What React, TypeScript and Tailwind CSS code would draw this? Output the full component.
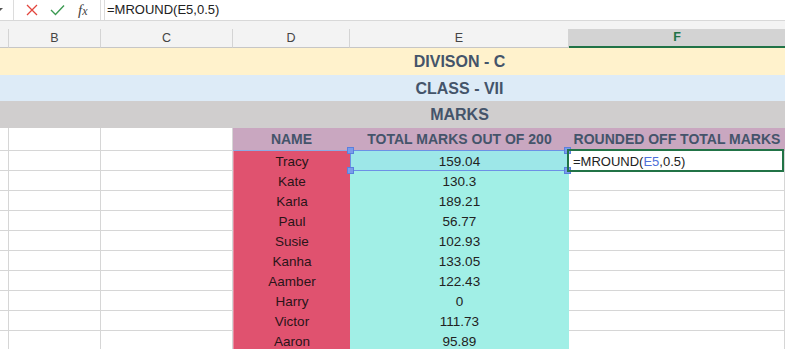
import React from "react";

const names = ["Tracy", "Kate", "Karla", "Paul", "Susie", "Kanha", "Aamber", "Harry", "Victor", "Aaron"];
const marks = ["159.04", "130.3", "189.21", "56.77", "102.93", "133.05", "122.43", "0", "111.73", "95.89"];

const grid = "border-r border-b border-[#d6d6d6]";

function Handle({ pos }: { pos: string }) {
  return <div className={`absolute w-[7px] h-[7px] bg-[#7a9ceb] border border-[#5b80dd] ${pos}`} />;
}

export default function App() {
  return (
    <div className="w-[785px] h-[349px] overflow-hidden bg-white relative font-['Liberation_Sans',Arial,sans-serif] text-[#222]">
      {/* formula bar */}
      <div className="h-[21px] flex border-b border-[#d8d8d8] bg-white">
        <div className="w-[14px] h-full relative border-r border-[#dcdcdc]">
          <div className="absolute left-[-3px] top-[8px] w-0 h-0 border-l-[3px] border-r-[3px] border-t-[3px] border-l-transparent border-r-transparent border-t-[#555]" />
        </div>
        <div className="w-[87px] h-full flex items-center border-r border-[#dcdcdc]">
          <svg width="12" height="12" viewBox="0 0 12 12" className="ml-[12px]">
            <path d="M1 1 L11 11 M11 1 L1 11" stroke="#e2453d" strokeWidth="1.3" fill="none" />
          </svg>
          <svg width="15" height="12" viewBox="0 0 15 12" className="ml-[12px]">
            <path d="M1 6 L5.5 10.5 L14 1.5" stroke="#3c9a52" strokeWidth="1.4" fill="none" />
          </svg>
          <span className="ml-[13px] font-['Liberation_Serif',serif] italic text-[15px] leading-none text-[#444]">
            f<span className="text-[12px]">x</span>
          </span>
        </div>
        <div className="w-[4px] h-full border-r border-[#dcdcdc]" />
        <div className="flex-1 h-full flex items-center pl-[2px] text-[13px] text-[#222]">=MROUND(E5,0.5)</div>
      </div>
      <div className="h-[8px] bg-[#f3f3f3]" />
      {/* column headers */}
      <div className="h-[19px] flex bg-[#f3f3f3] text-[12.5px] text-[#444]">
        <div className="w-[9px] h-full border-r border-b border-r-[#d4d4d4] border-b-[#c6c6c6]" />
        <div className="w-[92px] h-full flex items-center justify-center border-r border-b border-r-[#d4d4d4] border-b-[#c6c6c6]">B</div>
        <div className="w-[132px] h-full flex items-center justify-center border-r border-b border-r-[#d4d4d4] border-b-[#c6c6c6]">C</div>
        <div className="w-[117px] h-full flex items-center justify-center border-r border-b border-r-[#d4d4d4] border-b-[#c6c6c6]">D</div>
        <div className="w-[219px] h-full flex items-center justify-center border-r border-b border-r-[#d4d4d4] border-b-[#c6c6c6]">E</div>
        <div className="w-[216px] h-full flex items-center justify-center bg-[#d3d3d3] border-b-2 border-[#217346] text-[#217346] font-bold">F</div>
      </div>
      {/* title rows */}
      <div className="h-[27px] flex bg-[#fff2cc]">
        <div className="w-[350px]" />
        <div className="w-[219px] flex items-center justify-center pt-[1px] whitespace-nowrap font-bold text-[16px] text-[#44546a]">DIVISON - C</div>
      </div>
      <div className="h-[26px] flex bg-[#ddebf7]">
        <div className="w-[350px]" />
        <div className="w-[219px] flex items-center justify-center pt-[1px] whitespace-nowrap font-bold text-[16px] text-[#44546a]">CLASS - VII</div>
      </div>
      <div className="h-[27px] flex bg-[#d0cece]">
        <div className="w-[350px]" />
        <div className="w-[219px] flex items-center justify-center pt-[1px] whitespace-nowrap font-bold text-[16px] text-[#44546a]">MARKS</div>
      </div>
      {/* header row */}
      <div className="h-[23px] flex">
        <div className={`w-[9px] h-full ${grid}`} />
        <div className={`w-[92px] h-full ${grid}`} />
        <div className={`w-[132px] h-full ${grid}`} />
        <div className="w-[117px] h-full flex items-center justify-center bg-[#c9a7c0] border-b border-[#8eaae2] font-bold text-[14px] text-[#44546a]">NAME</div>
        <div className="w-[219px] h-full flex items-center justify-center bg-[#c9a7c0] whitespace-nowrap font-bold text-[14px] text-[#44546a]">TOTAL MARKS OUT OF 200</div>
        <div className="w-[216px] h-full flex items-center justify-center bg-[#c9a7c0] whitespace-nowrap font-bold text-[14px] text-[#44546a]">ROUNDED OFF TOTAL MARKS</div>
      </div>
      {/* data rows */}
      {names.map((n, i) => (
        <div key={n} className="h-[20px] flex text-[13.5px]">
          <div className={`w-[9px] h-full ${grid}`} />
          <div className={`w-[92px] h-full ${grid}`} />
          <div className={`w-[132px] h-full ${grid}`} />
          <div className="w-[117px] h-full flex items-center justify-center pt-[2px] bg-[#e0526f] border-l border-[#e98aa0] text-[#2a1418]">{n}</div>
          <div className={`w-[219px] h-full relative flex items-center justify-center pt-[2px] ${i === 0 ? "bg-[#9de7e8]" : "bg-[#a1efe6]"} text-[#222]`}>
            {marks[i]}
            {i === 0 && (
              <div className="absolute left-0 right-[1px] top-[-1px] bottom-0 border border-[#6c91e6] z-10">
                <Handle pos="left-[-4px] top-[-4px]" />
                <Handle pos="right-[-4px] top-[-4px]" />
                <Handle pos="left-[-4px] bottom-[-4px]" />
                <Handle pos="right-[-4px] bottom-[-4px]" />
              </div>
            )}
          </div>
          <div className={`w-[216px] h-full relative flex items-center pl-[4px] pt-[2px] ${grid}`}>
            {i === 0 && (
              <>
                <span className="text-[13px] text-[#222] relative z-20">
                  =MROUND(<span className="text-[#4f6fd8]">E5</span>,0.5)
                </span>
                <div className="absolute left-[-2px] right-[0px] top-[-2px] bottom-[-2px] border-2 border-[#217346] z-10" />
              </>
            )}
          </div>
        </div>
      ))}
    </div>
  );
}
